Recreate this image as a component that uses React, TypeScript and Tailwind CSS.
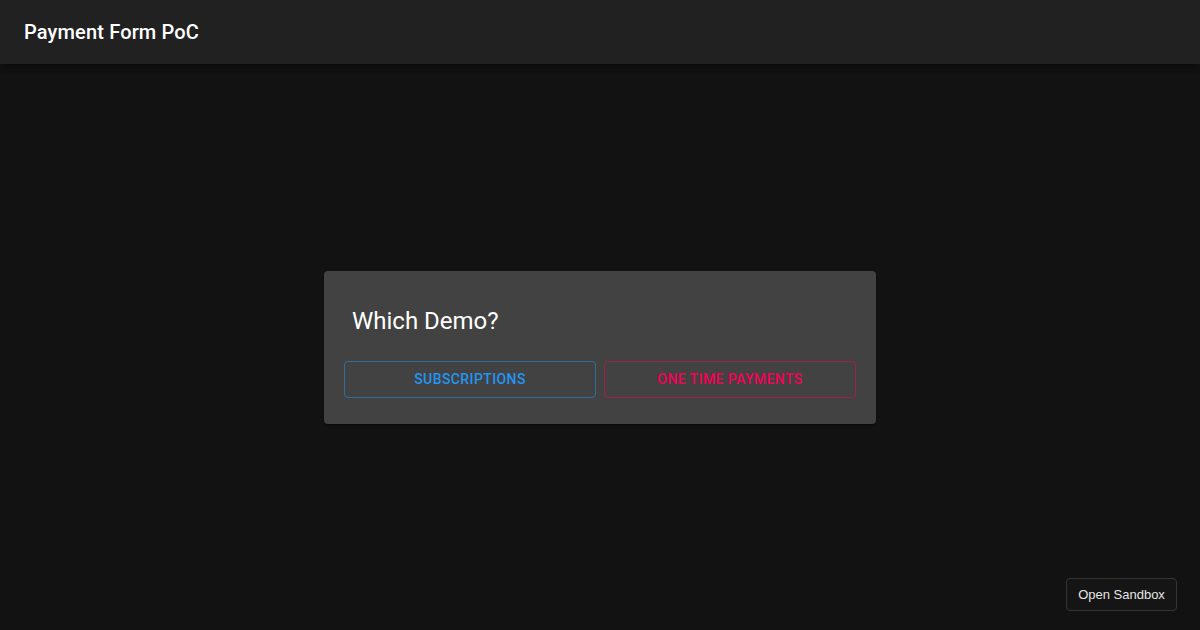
export default function App() {
  return (
    <div className="min-h-[630px] h-[630px] bg-[#121212] flex flex-col relative overflow-hidden font-['Roboto',sans-serif]">
      {/* App bar */}
      <header className="h-16 shrink-0 bg-[#212121] flex items-center px-6 shadow-[0_2px_4px_-1px_rgba(0,0,0,0.2),0_4px_5px_0_rgba(0,0,0,0.14),0_1px_10px_0_rgba(0,0,0,0.12)] z-10">
        <h1 className="text-[20px] font-medium text-white leading-[1.6] tracking-[0.0075em]">Payment Form PoC</h1>
      </header>

      <main className="flex-1 flex items-center justify-center pt-[1px]">
        <div className="w-[552px] bg-[#424242] rounded-[4px] px-5 pt-[34px] pb-[26px] shadow-[0_2px_1px_-1px_rgba(0,0,0,0.2),0_1px_1px_0_rgba(0,0,0,0.14),0_1px_3px_0_rgba(0,0,0,0.12)]">
          <h2 className="px-2 text-[24px] leading-8 text-white font-normal">Which Demo?</h2>
          <div className="mt-[24px] grid grid-cols-2 gap-2">
            <button className="h-[37px] rounded-[4px] border border-[rgba(33,150,243,0.5)] text-[#2196f3] text-[14px] font-medium uppercase tracking-[0.02857em]">
              Subscriptions
            </button>
            <button className="h-[37px] rounded-[4px] border border-[rgba(245,0,87,0.5)] text-[#f50057] text-[14px] font-medium uppercase tracking-[0.02857em]">
              One Time Payments
            </button>
          </div>
        </div>
      </main>

      {/* floating sandbox link */}
      <button className="absolute right-[23px] bottom-[19px] w-[111px] h-[33px] rounded-[4px] bg-[#151515] border border-[#343434] text-[#e5e5e5] text-[13px] font-['Liberation_Sans',sans-serif]">
        Open Sandbox
      </button>
    </div>
  );
}
